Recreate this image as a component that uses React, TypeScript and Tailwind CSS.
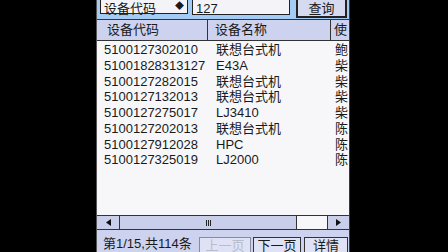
import React from 'react';

const rows = [
  { code: '5100127302010', name: '联想台式机', user: '鲍' },
  { code: '51001828313127', name: 'E43A', user: '柴' },
  { code: '5100127282015', name: '联想台式机', user: '柴' },
  { code: '5100127132013', name: '联想台式机', user: '柴' },
  { code: '5100127275017', name: 'LJ3410', user: '柴' },
  { code: '5100127202013', name: '联想台式机', user: '陈' },
  { code: '5100127912028', name: 'HPC', user: '陈' },
  { code: '5100127325019', name: 'LJ2000', user: '陈' },
];

const font = { fontFamily: '"Liberation Sans", "Noto Sans CJK SC", sans-serif' };

export default function App() {
  return (
    <div className="w-[448px] h-[252px] bg-black flex overflow-hidden" style={font}>
      <div className="w-[96px]" />
      <div className="w-[1px] h-full bg-[#555]" />
      <div className="w-[253px] h-full flex flex-col overflow-hidden bg-[#f7f7fa] border-r border-[#3a3a3a] text-[13px] text-[#1a1a1a]">
        {/* search bar */}
        <div className="h-[20px] shrink-0 bg-[#a3cbf3] flex items-end overflow-hidden border-b border-[#333]">
          <div className="ml-[3px] mb-[5px] w-[88px] h-[22px] shrink-0 bg-[#f4f4f8] border border-[#222] flex items-end justify-between px-[3px]">
            <span className="leading-[14px] mb-[-3px]">设备代码</span>
            <span className="text-[9px] leading-[14px] mb-[0px]">◆</span>
          </div>
          <div className="ml-[4px] mb-[4px] w-[98px] h-[22px] shrink-0 bg-[#f4f4f8] border border-[#222] flex items-end px-[3px]">
            <span className="leading-[14px] mb-[-2px]">127</span>
          </div>
          <div className="ml-[6px] mb-[1px] w-[51px] h-[24px] shrink-0 bg-[#d6daf0] border-2 border-[#222] flex items-end justify-center">
            <span className="leading-[14px] mb-[0px]">查询</span>
          </div>
        </div>

        {/* header */}
        <div className="h-[21px] shrink-0 flex bg-[#cdd2ef] border-b border-[#333]">
          <div className="w-[111px] shrink-0 border-r border-[#333] pl-[10px] leading-[20px]">设备代码</div>
          <div className="w-[123px] shrink-0 border-r border-[#333] pl-[7px] leading-[20px]">设备名称</div>
          <div className="flex-1 pl-[3px] leading-[20px] overflow-hidden">使</div>
        </div>

        {/* list */}
        <div className="flex-1 flex flex-col bg-[#f7f7fa] pt-[1px] overflow-hidden">
          {rows.map((r) => (
            <div key={r.code} className="h-[15.75px] shrink-0 flex leading-[15.75px] whitespace-nowrap">
              <div className="w-[111px] shrink-0 pl-[7px]">{r.code}</div>
              <div className="w-[123px] shrink-0 pl-[8px]">{r.name}</div>
              <div className="flex-1 pl-[4px] overflow-hidden">{r.user}</div>
            </div>
          ))}
        </div>

        {/* horizontal scrollbar */}
        <div className="h-[15px] shrink-0 flex border-t border-b border-[#333] bg-[#c9cfeb]">
          <div className="w-[23px] shrink-0 border-r border-[#333] flex items-center justify-center">
            <svg width="5" height="7" viewBox="0 0 5 7"><path d="M5 0 L0 3.5 L5 7 Z" fill="#111" /></svg>
          </div>
          <div className="w-[177px] shrink-0 flex items-center justify-center border-r border-[#333]">
            <div className="flex gap-[1px]">
              <div className="w-[1px] h-[6px] bg-[#222]" />
              <div className="w-[1px] h-[6px] bg-[#222]" />
              <div className="w-[1px] h-[6px] bg-[#222]" />
            </div>
          </div>
          <div className="w-[31px] shrink-0 bg-[#f7f7fa] border-r border-[#333]" />
          <div className="flex-1 flex items-center justify-center">
            <svg width="5" height="7" viewBox="0 0 5 7"><path d="M0 0 L5 3.5 L0 7 Z" fill="#111" /></svg>
          </div>
        </div>

        {/* status bar */}
        <div className="h-[22px] shrink-0 bg-[#cdd2ef] flex items-start pt-[7px] overflow-hidden">
          <span className="ml-[6px] mt-[-1px] w-[94px] shrink-0 whitespace-nowrap leading-[16px]">第1/15,共114条</span>
          <div className="ml-[2px] w-[52px] h-[24px] shrink-0 border border-[#8a8a9a] bg-[#dfe2f5] text-[#b8bccc] text-center leading-[16px]">上一页</div>
          <div className="ml-[2px] w-[48px] h-[24px] shrink-0 border border-[#333] bg-[#dfe2f5] text-center leading-[16px]">下一页</div>
          <div className="ml-[3px] w-[44px] h-[24px] shrink-0 border border-[#333] bg-[#dfe2f5] text-center leading-[16px]">详情</div>
        </div>
      </div>
      <div className="flex-1" />
    </div>
  );
}
